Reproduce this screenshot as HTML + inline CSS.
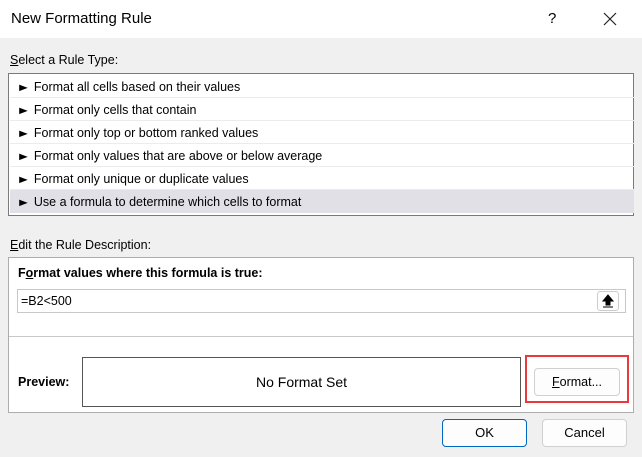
<!DOCTYPE html>
<html><head><style>
body{margin:0;width:642px;height:457px;background:#f0f0f0;font-family:"Liberation Sans",sans-serif;font-size:12.5px;color:#000;position:relative;overflow:hidden}
.a{position:absolute}
.title{left:0;top:0;width:642px;height:38px;background:#fff}
.row{position:absolute;left:1px;width:624px;height:23px;line-height:25px;border-bottom:1px solid #ececec;padding-left:8px;box-sizing:border-box}
.row span{font-size:11px;margin-right:5px;display:inline-block;transform:scaleX(1.3)}
.btn{position:absolute;background:#fdfdfd;border:1px solid #d0d0d0;border-radius:4px;box-sizing:border-box;text-align:center;font-size:13px}
</style></head><body>
<div class="a title"></div>
<div class="a" style="left:11px;top:10px;font-size:15px">New Formatting Rule</div>
<div class="a" style="left:548px;top:10px;font-size:15px">?</div>
<svg class="a" style="left:602px;top:11px" width="16" height="16"><path d="M2 2L14 14M14 2L2 14" stroke="#222" stroke-width="1.2"/></svg>
<div class="a" style="left:10px;top:53px"><u>S</u>elect a Rule Type:</div>
<div class="a" style="left:8px;top:73px;width:626px;height:143px;background:#fff;border:1px solid #7a7a7a;box-sizing:border-box">
<div class="row" style="top:1px"><span>►</span>Format all cells based on their values</div>
<div class="row" style="top:24px"><span>►</span>Format only cells that contain</div>
<div class="row" style="top:47px"><span>►</span>Format only top or bottom ranked values</div>
<div class="row" style="top:70px"><span>►</span>Format only values that are above or below average</div>
<div class="row" style="top:93px"><span>►</span>Format only unique or duplicate values</div>
<div class="row" style="top:116px;background:#e0e0e6;border:none"><span>►</span>Use a formula to determine which cells to format</div>
</div>
<div class="a" style="left:10px;top:238px"><u>E</u>dit the Rule Description:</div>
<div class="a" style="left:8px;top:257px;width:626px;height:156px;background:#fff;border:1px solid #adadad;box-sizing:border-box"></div>
<div class="a" style="left:18px;top:266px;font-weight:bold">F<u>o</u>rmat values where this formula is true:</div>
<div class="a" style="left:17px;top:289px;width:609px;height:24px;border:1px solid #c8c8c8;box-sizing:border-box;line-height:22px;padding-left:3px">=B2&lt;500</div>
<div class="a" style="left:597px;top:291px;width:22px;height:20px;border:1px solid #ccc;border-radius:3px;box-sizing:border-box;background:#fdfdfd"></div>
<svg class="a" style="left:601px;top:293px" width="14" height="16"><path d="M7 2L2 8H5V12H9V8H12Z M2 14H12" fill="#000" stroke="#000" stroke-width="1"/></svg>
<div class="a" style="left:9px;top:336px;width:624px;height:1px;background:#c8c8c8"></div>
<div class="a" style="left:18px;top:375px;font-weight:bold">Preview:</div>
<div class="a" style="left:82px;top:357px;width:439px;height:50px;border:1px solid #555;box-sizing:border-box;text-align:center;line-height:48px;font-size:14px">No Format Set</div>
<div class="a" style="left:525px;top:355px;width:104px;height:48px;border:2px solid #e8393c;box-sizing:border-box"></div>
<div class="btn" style="left:534px;top:368px;width:86px;height:28px;line-height:26px;font-size:12.5px"><u>F</u>ormat...</div>
<div class="btn" style="left:442px;top:419px;width:85px;height:28px;line-height:26px;border:1px solid #0067c0">OK</div>
<div class="btn" style="left:542px;top:419px;width:85px;height:28px;line-height:26px">Cancel</div>
</body></html>
